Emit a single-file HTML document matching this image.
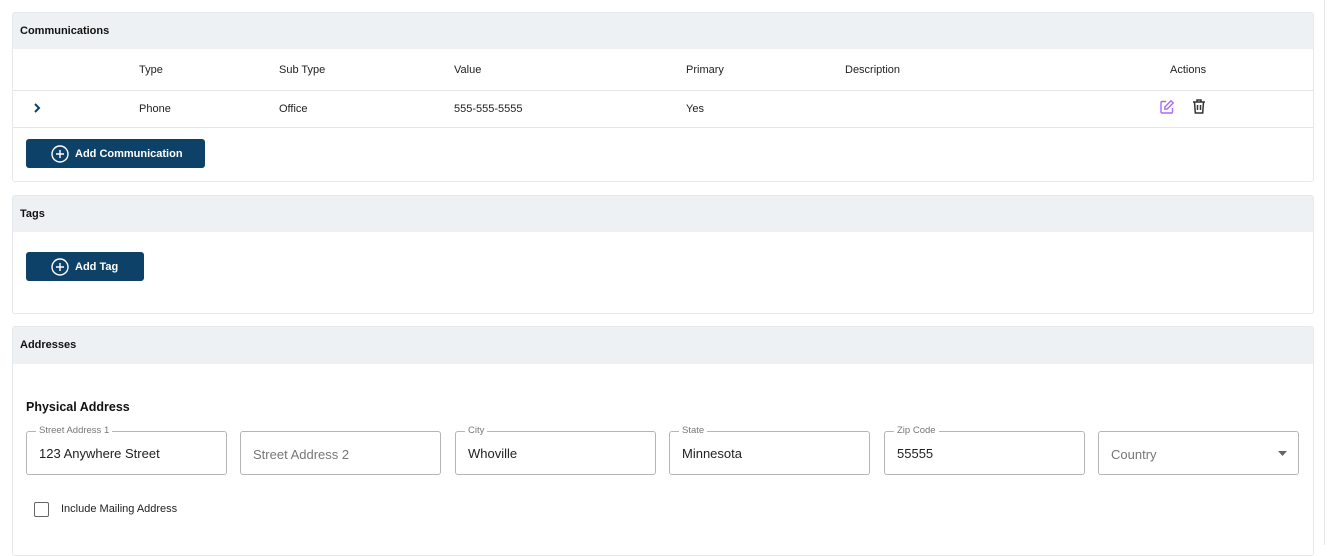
<!DOCTYPE html>
<html><head><style>
*{box-sizing:border-box;margin:0;padding:0}
body{width:1329px;height:545px;background:#fff;font-family:"Liberation Sans",sans-serif;font-size:11px;color:#222;position:relative;overflow:hidden}
.card{position:absolute;left:12px;width:1302px;border:1px solid #e6e8eb;border-radius:3px;background:#fff}
.hd{background:#eef1f4;height:36px;line-height:36px;padding-left:7px;font-weight:bold;font-size:11px;color:#111}
.abs{position:absolute}
.btn{position:absolute;background:#0d4168;color:#fff;border-radius:3px;font-weight:bold;font-size:11px;display:flex;align-items:center;padding-left:25px}
.btn svg{margin-right:6px}
.line{position:absolute;left:0;right:0;height:1px;background:#e3e5e8}
.inp{position:absolute;top:104px;width:201px;height:44px;border:1px solid #b5b5b5;border-radius:3px;font-size:13px;color:#222;padding:14px 0 0 12px}
.inp .lb{position:absolute;top:-7px;left:9px;background:#fff;padding:0 3px;font-size:9.5px;color:#777}
.ph{color:#777;padding-top:15px}
</style></head><body>
<div style="position:absolute;left:1324px;top:0;width:1px;height:545px;background:#e6e6e6"></div>

<div class="card" style="top:12px;height:170px">
 <div class="hd">Communications</div>
 <div class="abs" style="top:51px;left:126px">Type</div>
 <div class="abs" style="top:51px;left:266px">Sub Type</div>
 <div class="abs" style="top:51px;left:441px">Value</div>
 <div class="abs" style="top:51px;left:673px">Primary</div>
 <div class="abs" style="top:51px;left:832px">Description</div>
 <div class="abs" style="top:51px;left:1157px">Actions</div>
 <div class="line" style="top:77px"></div>
 <svg class="abs" style="top:90px;left:20px" width="8" height="10" viewBox="0 0 8 10"><path d="M2 1l4 4-4 4" stroke="#0d4168" stroke-width="2" fill="none"/></svg>
 <div class="abs" style="top:90px;left:126px">Phone</div>
 <div class="abs" style="top:90px;left:266px">Office</div>
 <div class="abs" style="top:90px;left:441px">555-555-5555</div>
 <div class="abs" style="top:90px;left:673px">Yes</div>
 <svg class="abs" style="top:86px;left:1146px" width="16" height="16" viewBox="0 0 16 16" fill="none" stroke="#a66cf5" stroke-width="1.4"><path d="M7 2.5H3a1 1 0 0 0-1 1V13a1 1 0 0 0 1 1h9.5a1 1 0 0 0 1-1V9"/><path d="M12 1.8l2.2 2.2L8 10.2H5.8V8z"/></svg>
 <svg class="abs" style="top:85px;left:1178px" width="16" height="17" viewBox="0 0 16 17" fill="none" stroke="#333" stroke-width="1.5"><path d="M2 4h12M6 4V2h4v2M3.5 4l.8 11h7.4l.8-11M6.5 7v5M9.5 7v5"/></svg>
 <div class="line" style="top:114px"></div>
 <div class="btn" style="left:13px;top:126px;width:179px;height:29px"><svg width="18" height="18" viewBox="0 0 18 18" fill="none" stroke="#fff" stroke-width="1.4"><circle cx="9" cy="9" r="8"/><path d="M9 5v8M5 9h8"/></svg>Add Communication</div>
</div>

<div class="card" style="top:195px;height:119px">
 <div class="hd">Tags</div>
 <div class="btn" style="left:13px;top:56px;width:118px;height:29px"><svg width="18" height="18" viewBox="0 0 18 18" fill="none" stroke="#fff" stroke-width="1.4"><circle cx="9" cy="9" r="8"/><path d="M9 5v8M5 9h8"/></svg>Add Tag</div>
</div>

<div class="card" style="top:326px;height:230px">
 <div class="hd" style="height:37px;line-height:37px">Addresses</div>
 <div class="abs" style="top:73px;left:13px;font-size:12.5px;font-weight:bold;color:#111">Physical Address</div>
 <div class="inp" style="left:13px"><span class="lb">Street Address 1</span>123 Anywhere Street</div>
 <div class="inp ph" style="left:227px">Street Address 2</div>
 <div class="inp" style="left:442px"><span class="lb">City</span>Whoville</div>
 <div class="inp" style="left:656px"><span class="lb">State</span>Minnesota</div>
 <div class="inp" style="left:871px"><span class="lb">Zip Code</span>55555</div>
 <div class="inp ph" style="left:1085px">Country<svg class="abs" style="right:11px;top:19px" width="9" height="5"><path d="M0 0h9L4.5 5z" fill="#666"/></svg></div>
 <div class="abs" style="top:175px;left:21px;width:15px;height:15px;border:1.5px solid #666;border-radius:2px"></div>
 <div class="abs" style="top:176px;left:48px">Include Mailing Address</div>
</div>
</body></html>
